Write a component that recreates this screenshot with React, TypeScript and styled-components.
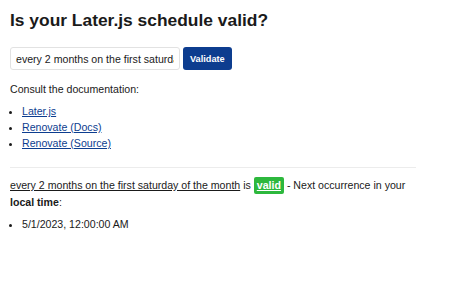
import React, { useState } from "react";
import styled, { createGlobalStyle } from "styled-components";

const GlobalStyle = createGlobalStyle`
  html, body {
    margin: 0;
    padding: 0;
    background: #ffffff;
  }
  body {
    font-family: "Liberation Sans", Arial, sans-serif;
    color: #1a1a1a;
  }
`;

const Page = styled.div`
  width: 406px;
  padding: 8px 10px;
  font-size: 10.6px;
  line-height: 16px;
`;

const Title = styled.h1`
  margin: 1px 0 16px;
  font-size: 17.4px;
  line-height: 22px;
  font-weight: 700;
  color: #1a1a1a;
`;

const Form = styled.form`
  display: flex;
  align-items: center;
  gap: 3px;
  margin-bottom: 11px;
`;

const Field = styled.input`
  box-sizing: border-box;
  width: 170px;
  height: 23px;
  padding: 0 5px;
  border: 1px solid #e2e2e2;
  border-radius: 3px;
  font-family: inherit;
  font-size: 10.6px;
  color: #1a1a1a;
  outline: none;
`;

const Button = styled.button`
  box-sizing: border-box;
  height: 23px;
  padding: 0 7px;
  border: none;
  border-radius: 3px;
  background: #0d3d8f;
  color: #ffffff;
  font-family: inherit;
  font-size: 9.2px;
  font-weight: 700;
  cursor: pointer;
`;

const Text = styled.p`
  margin: 0 0 6px;
`;

const List = styled.ul`
  margin: 0;
  padding-left: 12px;
  list-style: disc;
`;

const Item = styled.li`
  padding-left: 0;
`;

const Link = styled.a`
  color: #0d3d8f;
  text-decoration: underline;
`;

const Divider = styled.hr`
  margin: 16px 0 9px;
  border: none;
  border-top: 1px solid #ececec;
`;

const Result = styled.p`
  margin: 0 0 5px;
  line-height: 17px;
`;

const Expr = styled.span`
  text-decoration: underline;
`;

const Badge = styled.span`
  display: inline-block;
  padding: 1px 3px;
  border-radius: 2px;
  background: #2db83d;
  color: #ffffff;
  font-weight: 700;
  text-decoration: underline;
  line-height: 15px;
`;

const docs = [
  { label: "Later.js", href: "#later" },
  { label: "Renovate (Docs)", href: "#docs" },
  { label: "Renovate (Source)", href: "#source" },
];

export default function App() {
  const [value, setValue] = useState("every 2 months on the first saturday of the month");

  return (
    <>
      <GlobalStyle />
      <Page>
        <Title>Is your Later.js schedule valid?</Title>
        <Form onSubmit={(e) => e.preventDefault()}>
          <Field value={value} onChange={(e) => setValue(e.target.value)} />
          <Button type="submit">Validate</Button>
        </Form>
        <Text>Consult the documentation:</Text>
        <List>
          {docs.map((d) => (
            <Item key={d.label}>
              <Link href={d.href}>{d.label}</Link>
            </Item>
          ))}
        </List>
        <Divider />
        <Result>
          <Expr>every 2 months on the first saturday of the month</Expr> is{" "}
          <Badge>valid</Badge> - Next occurrence in your <b>local time</b>:
        </Result>
        <List>
          <Item>5/1/2023, 12:00:00 AM</Item>
        </List>
      </Page>
    </>
  );
}
